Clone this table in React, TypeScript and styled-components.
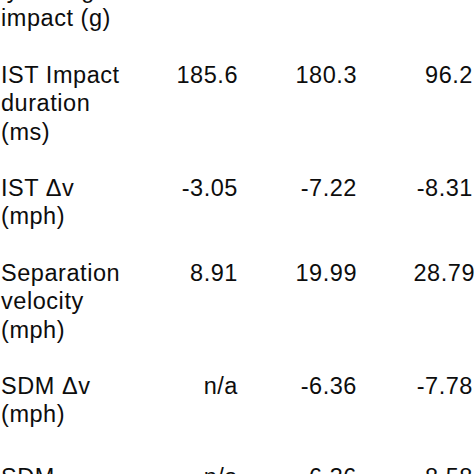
import React from 'react';
import styled, { createGlobalStyle } from 'styled-components';

const GlobalStyle = createGlobalStyle`
  html, body {
    margin: 0;
    padding: 0;
    background: #ffffff;
  }
`;

const Page = styled.div`
  width: 474px;
  height: 474px;
  overflow: hidden;
  background: #ffffff;
  color: #0d0d0d;
  font-family: 'Liberation Sans', Arial, Helvetica, sans-serif;
  font-size: 23.5px;
  letter-spacing: 0.55px;
  line-height: 28.4px;
`;

const Table = styled.div`
  display: flex;
  flex-direction: column;
  margin-top: -24px;
`;

const Row = styled.div<{ $gap: number }>`
  display: grid;
  grid-template-columns: 140px 98px 119px 116px;
  align-items: start;
  padding-bottom: ${({ $gap }) => `${$gap}px`};
`;

const LabelCell = styled.div`
  display: flex;
  flex-direction: column;
  padding-left: 1px;
`;

const ValueCell = styled.div<{ $shift?: number }>`
  text-align: right;
  white-space: nowrap;
  margin-right: ${({ $shift }) => ($shift ? `-${$shift}px` : '0')};
`;

interface RowData {
  label: string[];
  values: string[];
  gap?: number;
}

const rows: RowData[] = [
  { label: ['ly during', 'impact (g)'], values: ['', '', ''] },
  { label: ['IST Impact', 'duration', '(ms)'], values: ['185.6', '180.3', '96.2'] },
  { label: ['IST \u0394v', '(mph)'], values: ['-3.05', '-7.22', '-8.31'] },
  { label: ['Separation', 'velocity', '(mph)'], values: ['8.91', '19.99', '28.79'] },
  { label: ['SDM \u0394v', '(mph)'], values: ['n/a', '-6.36', '-7.78'], gap: 34 },
  { label: ['SDM', 'separation', 'velocity', '(mph)'], values: ['n/a', '-6.36', '-8.58'] },
];

export default function App() {
  return (
    <>
      <GlobalStyle />
      <Page>
        <Table>
          {rows.map((row, i) => (
            <Row key={i} $gap={row.gap ?? 28}>
              <LabelCell>
                {row.label.map((line, j) => (
                  <span key={j}>{line}</span>
                ))}
              </LabelCell>
              {row.values.map((v, j) => (
                <ValueCell key={j} $shift={v === '28.79' ? 2 : 0}>
                  {v}
                </ValueCell>
              ))}
            </Row>
          ))}
        </Table>
      </Page>
    </>
  );
}
